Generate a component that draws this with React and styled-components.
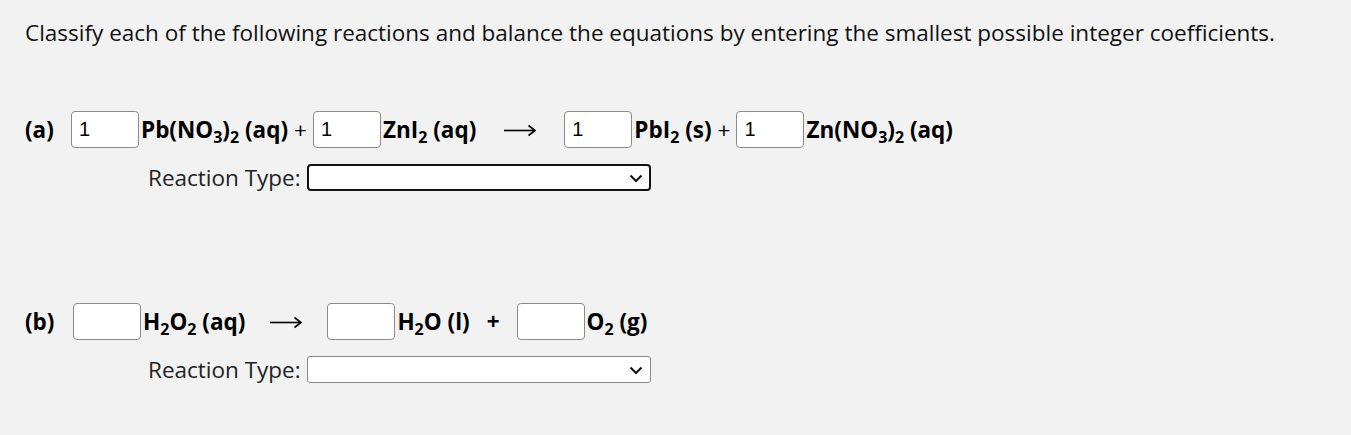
import React from "react";
import styled, { createGlobalStyle } from "styled-components";

const Global = createGlobalStyle`
  html, body { margin: 0; padding: 0; background: #f2f2f2; }
  body { font-family: "Open Sans", sans-serif; color: #000; }
`;

const Page = styled.div`
  width: 1351px;
  height: 435px;
  box-sizing: border-box;
  padding: 18px 25px 0 25px;
  background: #f2f2f2;
`;

const Prompt = styled.p`
  margin: 0;
  font-size: 22.5px;
  line-height: 30px;
  color: #111;
`;

const Problem = styled.div`
  display: flex;
  flex-direction: column;
  margin-top: ${(p) => p.$top}px;
`;

const EqRow = styled.div`
  display: flex;
  align-items: center;
  height: 37px;
  font-size: 22.5px;
`;

const Label = styled.span`
  font-weight: 700;
  width: ${(p) => p.$w}px;
  flex: none;
`;

const Coef = styled.input`
  box-sizing: border-box;
  width: 68px;
  height: 37px;
  margin: 0 2px 0 0;
  padding: 0 7px;
  border: 1px solid #8a8a8a;
  border-radius: 4px;
  background: #fff;
  font-family: "Liberation Sans", Arial, sans-serif;
  font-size: 20px;
  color: #000;
  outline: none;
`;

const Species = styled.span`
  font-weight: 700;
  white-space: nowrap;
  sub {
    font-size: 16px;
    vertical-align: -5px;
    line-height: 0;
  }
`;

const Plus = styled.span`
  font-weight: ${(p) => (p.$bold ? 700 : 400)};
  margin: 0 ${(p) => p.$gap}px;
`;

const Arrow = styled.svg`
  flex: none;
  margin: 0 ${(p) => p.$gap}px;
`;

function ReactionArrow({ gap }) {
  return (
    <Arrow $gap={gap} width="32" height="14" viewBox="0 0 32 14">
      <path d="M0 7.5 H30.5" stroke="#000" strokeWidth="1.6" />
      <path d="M24.5 2.5 L31 7.5 L24.5 12.5" fill="none" stroke="#000" strokeWidth="1.6" />
    </Arrow>
  );
}

const TypeRow = styled.div`
  display: flex;
  align-items: center;
  height: 27px;
  margin-top: 16px;
  padding-left: 123px;
  font-size: 22.5px;
`;

const TypeLabel = styled.span`
  color: #222;
  margin-right: 6px;
`;

const SelectWrap = styled.div`
  position: relative;
  width: 344px;
  height: 27px;
`;

const Select = styled.select`
  display: block;
  appearance: none;
  box-sizing: border-box;
  width: 100%;
  height: 100%;
  margin: 0;
  background: #fff;
  border: ${(p) => (p.$focused ? "2px solid #111" : "1px solid #8a8a8a")};
  border-radius: ${(p) => (p.$focused ? 4 : 3)}px;
  outline: none;
  font-size: 16px;
`;

const Chevron = styled.svg`
  position: absolute;
  right: 8px;
  top: 10px;
  pointer-events: none;
`;

function TypeSelect({ focused }) {
  return (
    <SelectWrap>
      <Select $focused={focused} defaultValue="">
        <option value=""></option>
      </Select>
      <Chevron width="14" height="9" viewBox="0 0 14 9">
        <path d="M1.5 1.5 L7 7 L12.5 1.5" fill="none" stroke="#111" strokeWidth="2" />
      </Chevron>
    </SelectWrap>
  );
}

export default function App() {
  return (
    <Page>
      <Global />
      <Prompt>
        Classify each of the following reactions and balance the equations by entering the smallest possible integer coefficients.
      </Prompt>

      <Problem $top={63}>
        <EqRow>
          <Label $w={46}>(a)</Label>
          <Coef defaultValue="1" />
          <Species>
            Pb(NO<sub>3</sub>)<sub>2</sub> (aq)
          </Species>
          <Plus $gap={6}>+</Plus>
          <Coef defaultValue="1" />
          <Species>
            ZnI<sub>2</sub> (aq)
          </Species>
          <ReactionArrow gap={28} />
          <Coef defaultValue="1" />
          <Species>
            PbI<sub>2</sub> (s)
          </Species>
          <Plus $gap={6}>+</Plus>
          <Coef defaultValue="1" />
          <Species>
            Zn(NO<sub>3</sub>)<sub>2</sub> (aq)
          </Species>
        </EqRow>
        <TypeRow>
          <TypeLabel>Reaction Type:</TypeLabel>
          <TypeSelect focused />
        </TypeRow>
      </Problem>

      <Problem $top={112}>
        <EqRow>
          <Label $w={48}>(b)</Label>
          <Coef defaultValue="" />
          <Species>
            H<sub>2</sub>O<sub>2</sub> (aq)
          </Species>
          <ReactionArrow gap={25} />
          <Coef defaultValue="" />
          <Species>
            H<sub>2</sub>O (l)
          </Species>
          <Plus $bold $gap={17}>+</Plus>
          <Coef defaultValue="" />
          <Species>
            O<sub>2</sub> (g)
          </Species>
        </EqRow>
        <TypeRow>
          <TypeLabel>Reaction Type:</TypeLabel>
          <TypeSelect />
        </TypeRow>
      </Problem>
    </Page>
  );
}
